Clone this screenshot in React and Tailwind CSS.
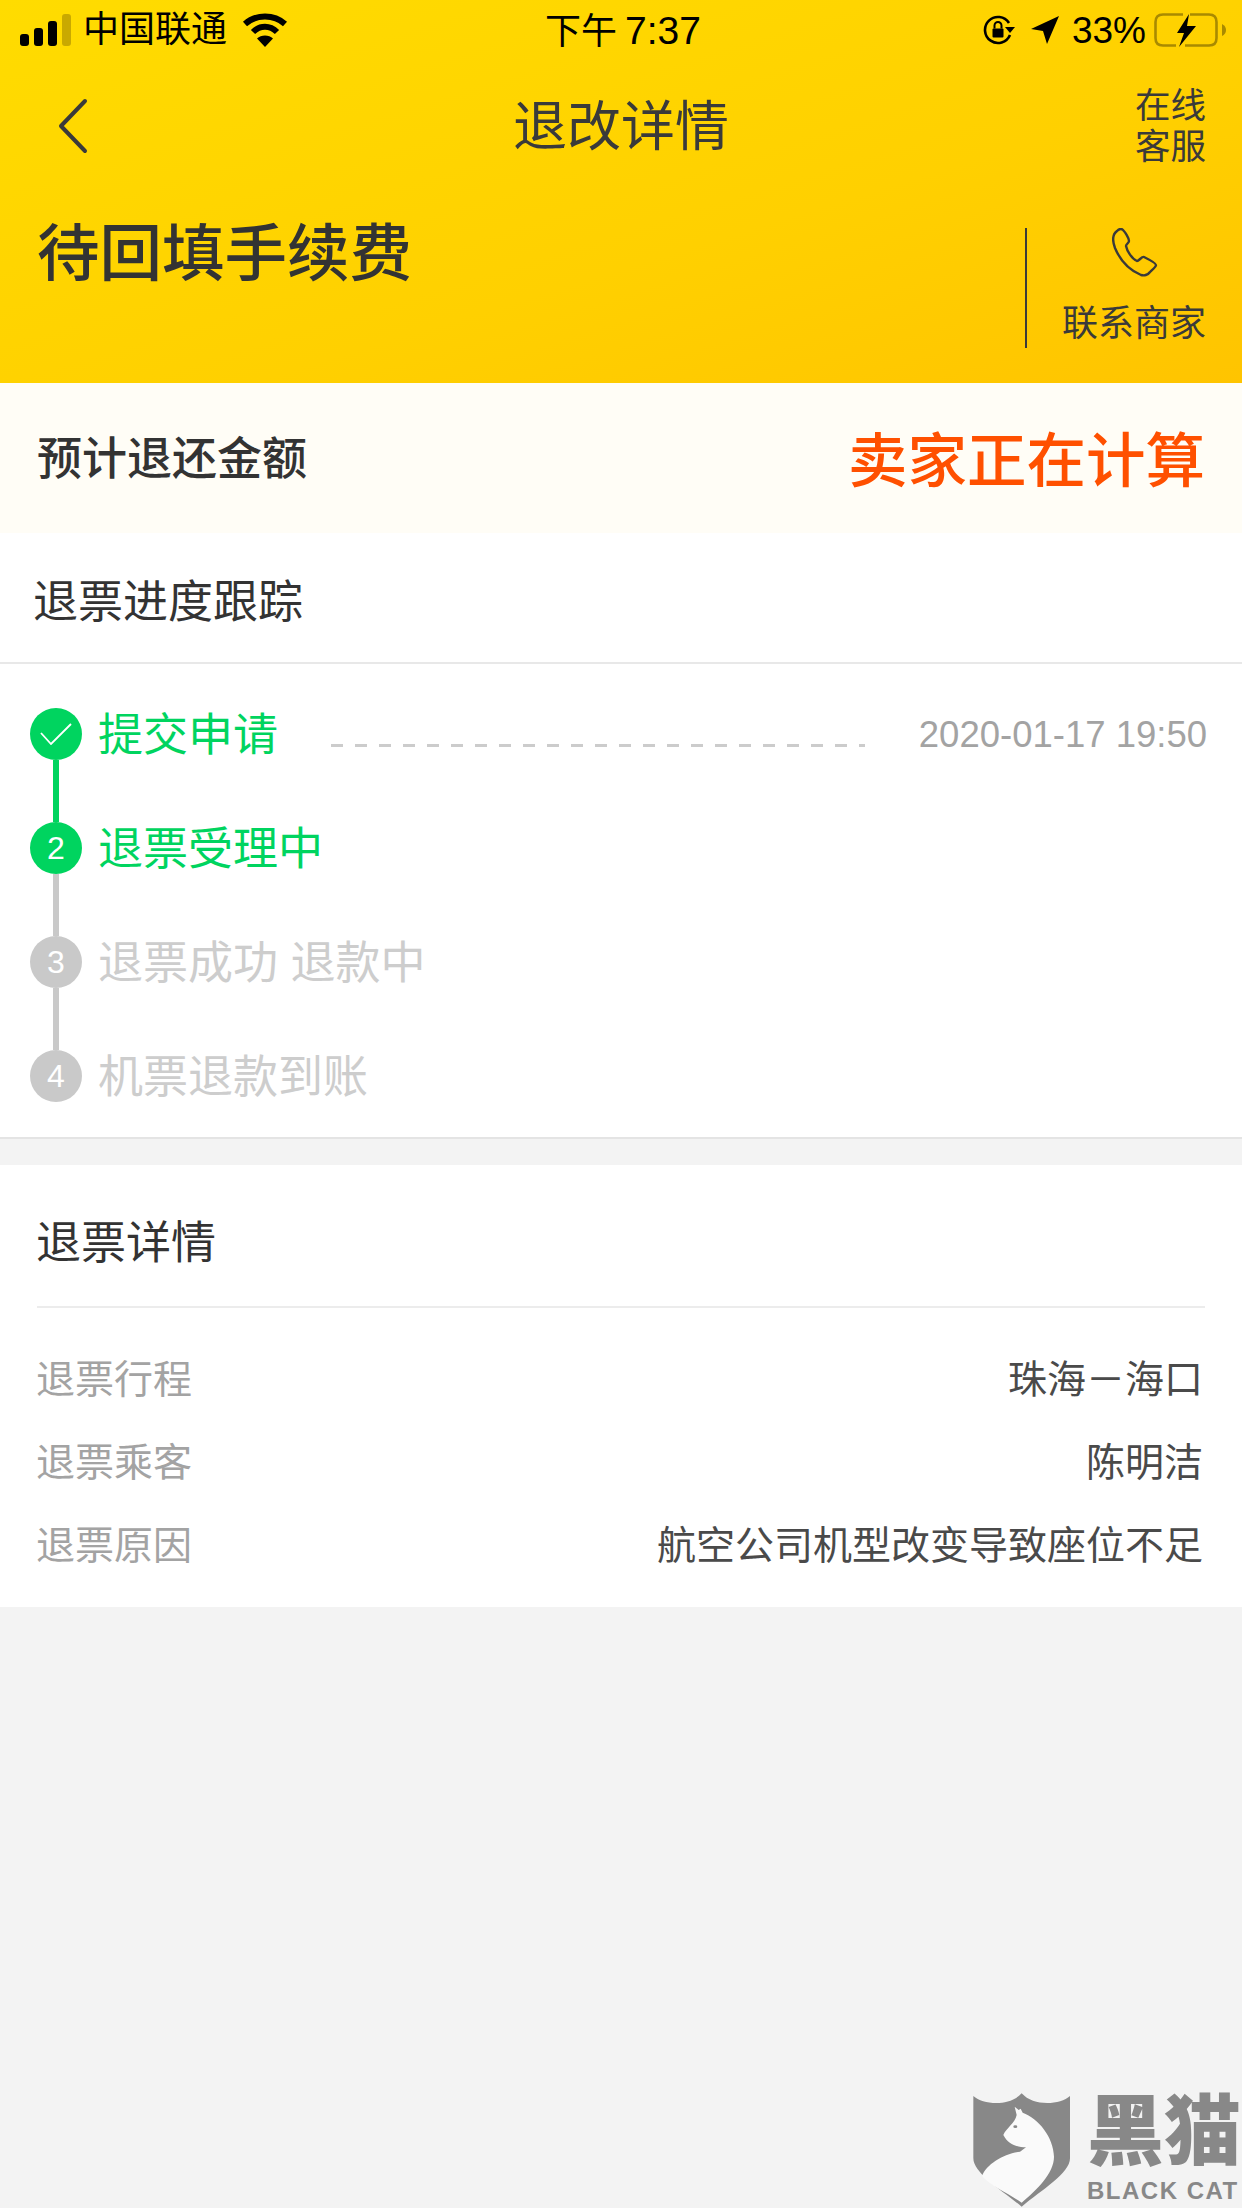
import React from 'react';

const steps = [
  { label: '提交申请', done: true, active: true, lineActive: true },
  { label: '退票受理中', num: 2, active: true },
  { label: '退票成功 退款中', num: 3 },
  { label: '机票退款到账', num: 4, last: true },
];

const details = [
  ['退票行程', '珠海－海口'],
  ['退票乘客', '陈明洁'],
  ['退票原因', '航空公司机型改变导致座位不足'],
];

const StatusBar = () => (
  <div className="grid h-[60px] grid-cols-[1fr_auto_1fr] items-center pl-[20px] pr-[16px] text-black">
    <div className="flex items-center">
      <svg width="51" height="32" viewBox="0 0 51 32">
        <rect x="0" y="20" width="9" height="12" rx="3" fill="#000" />
        <rect x="14" y="14" width="9" height="18" rx="3" fill="#000" />
        <rect x="28" y="7" width="9" height="25" rx="3" fill="#000" />
        <rect x="42" y="0" width="9" height="32" rx="3" fill="#c9a900" />
      </svg>
      <span className="ml-[12px] whitespace-nowrap text-[36px] leading-none">中国联通</span>
      <svg width="46" height="34" viewBox="0 0 46 34" className="ml-[15px]">
        <path d="M3 11 C14 1 32 1 43 11" fill="none" stroke="#000" strokeWidth="6" />
        <path d="M11 19 C18 12 28 12 35 19" fill="none" stroke="#000" strokeWidth="6" />
        <path d="M23 34 L15 25.5 C19 21.5 27 21.5 31 25.5 Z" fill="#000" />
      </svg>
    </div>
    <div className="whitespace-nowrap text-[36px] leading-none">
      下午<span className="ml-[8px] text-[39px] font-medium">7:37</span>
    </div>
    <div className="flex items-center justify-end">
      <svg width="32" height="30" viewBox="0 0 32 30">
        <path d="M26 8 A13 13 0 1 0 27 20" fill="none" stroke="#000" strokeWidth="2.6" />
        <path d="M22 12 L32 12 L27 18 Z" fill="#000" />
        <rect x="9.5" y="13.5" width="11" height="9" rx="1" fill="#000" />
        <path d="M11.5 13.5 V10.5 A3.5 3.5 0 0 1 18.5 10.5 V13.5" fill="none" stroke="#000" strokeWidth="2" />
      </svg>
      <svg width="28" height="28" viewBox="0 0 28 28" className="ml-[16px]">
        <path d="M28 0 L16 28 L12 15 L0 13 Z" fill="#000" />
      </svg>
      <span className="ml-[13px] text-[37px] leading-none">33%</span>
      <svg width="72" height="34" viewBox="0 0 72 34" className="ml-[8px]">
        <path d="M29 1.5 H9 Q1.5 1.5 1.5 9 V25 Q1.5 32.5 9 32.5 H22 M36 1.5 H55 Q62.5 1.5 62.5 9 V25 Q62.5 32.5 55 32.5 H31" fill="none" stroke="#a98a00" strokeWidth="2.6" />
        <path d="M68 11 Q72 13 72 17 Q72 21 68 23 Z" fill="#a98a00" />
        <path d="M35 1 L23 20 H30 L25 34 L42 13 H33 Z" fill="#000" />
      </svg>
    </div>
  </div>
);

const Step = ({ step }) => {
  const color = step.active ? 'bg-[#00d45f]' : 'bg-[#c9c9c9]';
  return (
    <div className="flex">
      <div className="flex w-[52px] flex-col items-center">
        <div className={`flex h-[52px] w-[52px] shrink-0 items-center justify-center rounded-full text-[32px] text-white ${color}`}>
          {step.done ? (
            <svg width="32" height="22" viewBox="0 0 32 22">
              <path d="M1 10 L11 21 L31 1" fill="none" stroke="#fff" strokeWidth="1.8" />
            </svg>
          ) : (
            step.num
          )}
        </div>
        {!step.last && (
          <div className={`h-[62px] w-[6px] ${step.lineActive ? 'bg-[#00d45f]' : 'bg-[#c9c9c9]'}`} />
        )}
      </div>
      <div className="ml-[16px] flex h-[52px] flex-1 items-center pr-[35px]">
        <span className={`mt-[3px] text-[45px] leading-none ${step.active ? 'text-[#00d45f]' : 'text-[#cdcdcd]'}`}>{step.label}</span>
        {step.done && (
          <>
            <div className="ml-[53px] mt-[22px] h-[3px] w-[534px] bg-[repeating-linear-gradient(90deg,#cccccc_0,#cccccc_12px,transparent_12px,transparent_24px)]" />
            <span className="ml-auto mt-[3px] whitespace-nowrap text-[36.5px] leading-none text-[#a3a3a3]">2020-01-17 19:50</span>
          </>
        )}
      </div>
    </div>
  );
};

const Watermark = () => (
  <div className="absolute left-[970px] top-[2090px] flex items-start">
    <svg width="104" height="118" viewBox="0 0 312 354">
      <path d="M10 18 C40 45 120 50 155 10 C190 50 270 45 300 18 L300 205 C300 250 215 300 155 350 C95 300 10 250 10 205 Z" fill="#888888" />
      <path d="M134 50 L146 60 L152 56 L158 68 C205 85 250 140 252 200 C252 250 200 300 155 338 C115 310 65 290 36 258 C50 222 100 192 150 185 L168 172 C145 172 115 165 100 135 C108 115 135 100 140 75 Z" fill="#fafafa" />
      <ellipse cx="136" cy="110" rx="6" ry="4" fill="#888888" />
    </svg>
    <div className="ml-[13px] mt-[3px] flex flex-col">
      <span className="-mt-[2px] whitespace-nowrap text-[77px] font-black leading-[82px] text-[#888888]">黑猫</span>
      <span className="mt-[6px] whitespace-nowrap text-[24px] font-bold leading-[24px] tracking-[1.5px] text-[#888888]">BLACK CAT</span>
    </div>
  </div>
);

export default function App() {
  return (
    <div className="relative h-[2208px] w-[1242px] overflow-hidden bg-[#f3f3f3] font-['Liberation_Sans','Noto_Sans_CJK_SC',sans-serif]">
      <header className="h-[383px] bg-gradient-to-br from-[#ffdc00] via-[#ffd000] via-60% to-[#ffc400]">
        <StatusBar />
        <div className="grid h-[132px] grid-cols-[1fr_auto_1fr] items-center px-[36px] text-[#3a3a3a]">
          <svg width="34" height="56" viewBox="0 0 34 56" className="ml-[20px]">
            <path d="M29 3 L5 28 L29 53" fill="none" stroke="#3a3a3a" strokeWidth="4" strokeLinecap="round" strokeLinejoin="round" />
          </svg>
          <h1 className="mt-[2px] text-[54px] font-normal leading-none">退改详情</h1>
          <div className="mt-[2px] justify-self-end text-center text-[35.5px] leading-[41px]">在线<br />客服</div>
        </div>
        <div className="flex justify-between pl-[37px] pr-[36px]">
          <div className="mt-[31px] text-[62.5px] font-medium leading-none text-[#333333]">待回填手续费</div>
          <div className="mt-[36px] flex h-[120px] border-l-2 border-[#3a3a3a] pl-[35px]">
            <div className="flex flex-col items-center text-[#3a3a3a]">
              <svg width="50" height="50" viewBox="0 0 50 50" className="ml-[6px]">
                <path d="M5 3 C1 6 0 12 3 20 C8 32 17 42 29 47 C32 48 36 47 38 44 C40 42 44 39 44 37 C44 35 36 31 32 29 C30 28 27 33 25 33 C20 31 15 23 14 18 C14 16 17 15 17 13 C17 10 13 4 11 2 C9 0 7 1 5 3 Z" fill="none" stroke="#3a3a3a" strokeWidth="2.4" />
              </svg>
              <span className="mt-[28px] whitespace-nowrap text-[36px] leading-none">联系商家</span>
            </div>
          </div>
        </div>
      </header>

      <div className="flex h-[150px] items-center justify-between bg-[#fffdf6] px-[37px]">
        <span className="mt-[3px] text-[45px] font-medium leading-none text-[#333333]">预计退还金额</span>
        <span className="mt-[8px] text-[59.5px] font-medium leading-none text-[#ff5000]">卖家正在计算</span>
      </div>

      <section className="bg-white">
        <div className="flex h-[131px] items-center border-b-2 border-[#e8e8e8] pl-[33px] pt-[10px] text-[45px] leading-none text-[#333333]">退票进度跟踪</div>
        <div className="h-[475px] border-b-2 border-[#e4e4e4] pl-[30px] pt-[44px]">
          {steps.map((step) => (
            <Step key={step.label} step={step} />
          ))}
        </div>
      </section>

      <section className="mt-[26px] h-[442px] bg-white px-[37px]">
        <div className="flex h-[143px] items-center border-b-2 border-[#ececec] pt-[16px] text-[45px] leading-none text-[#333333]">
          <span className="-ml-[1px]">退票详情</span>
        </div>
        <div className="flex flex-col gap-[44px] pt-[52px]">
          {details.map(([label, value]) => (
            <div key={label} className="flex items-center justify-between text-[39px] leading-[39px]">
              <span className="-ml-[1px] text-[#a3a3a3]">{label}</span>
              <span className="mr-[2px] text-[#4a4a4a]">{value}</span>
            </div>
          ))}
        </div>
      </section>

      <Watermark />
    </div>
  );
}
